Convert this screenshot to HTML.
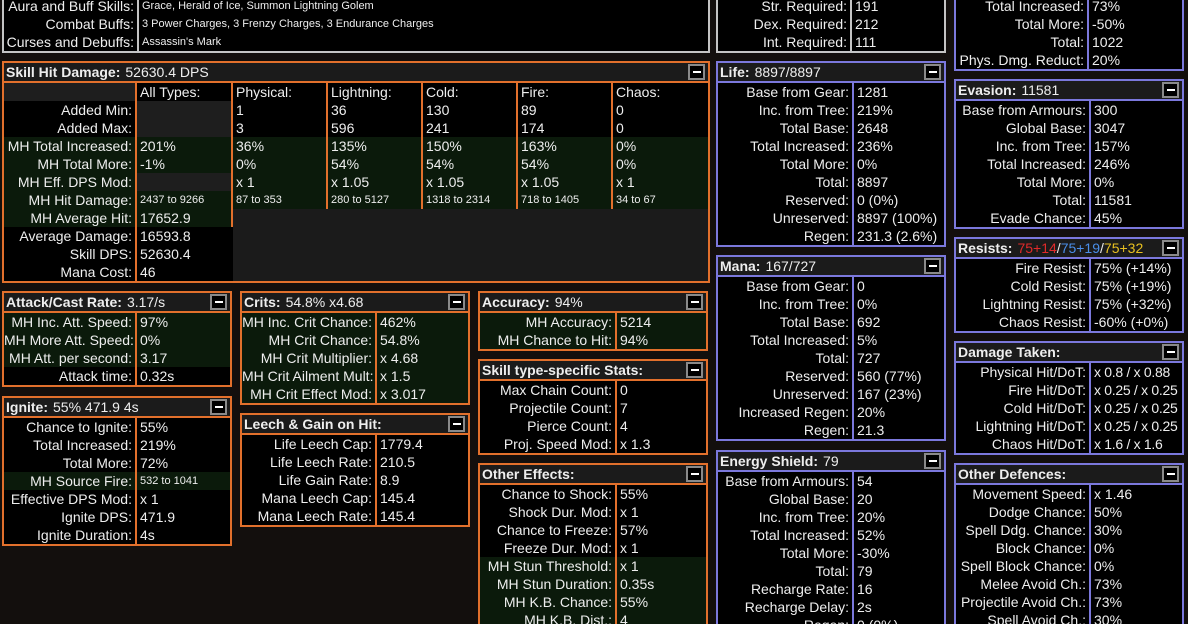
<!DOCTYPE html>
<html style="width:1188px;height:624px;overflow:hidden"><head><meta charset="utf-8">
<style>
*{margin:0;padding:0;box-sizing:border-box}
html,body{overflow:hidden}
body{width:1188px;height:624px;background:#130f0d;font-family:"Liberation Sans",sans-serif;font-size:14px;color:#eee;position:relative}
.p{position:absolute;border:2px solid;background:#1b1b1b;overflow:hidden}
.o{border-color:#e2702c}.b{border-color:#7b78dc}.w{border-color:#c4c4c4}
.h{height:20px;line-height:18px;border-bottom:2px solid;border-color:inherit;padding-left:2px;white-space:nowrap;position:relative}
.h b{margin-right:5px}
.h i{position:absolute;right:3px;top:1px;width:17px;height:16px;border:2px solid #8a8a8a;background:#000}
.h i:after{content:"";position:absolute;left:3px;top:5px;width:8px;height:2px;background:#fff}
.r{display:flex;height:18px;line-height:18px;white-space:nowrap}
.l{width:var(--lw);flex:none;text-align:right;padding-right:3px;border-right:2px solid;background:#000}
.o .l,.o .c{border-color:#e2702c}.b .l{border-color:#7b78dc}.w .l{border-color:#c4c4c4}
.v{flex:1;padding-left:3px;background:#000}
.g .l,.g .v,.g .c{background:#0b1a0b}
.c{width:95px;flex:none;border-right:2px solid;padding-left:3px;background:#000}
.c.f{width:96px}.c.z{border-right:0;flex:1}
.e{background:#1e1e1e!important}
.s{font-size:11px}
.t .v{letter-spacing:-0.3px}
</style></head><body>

<div class="p w" style="left:2px;top:-5px;width:708px;height:58px;--lw:135px">
<div class="r"><span class="l">Aura and Buff Skills:</span><span class="v s">Grace, Herald of Ice, Summon Lightning Golem</span></div>
<div class="r"><span class="l">Combat Buffs:</span><span class="v s">3 Power Charges, 3 Frenzy Charges, 3 Endurance Charges</span></div>
<div class="r"><span class="l">Curses and Debuffs:</span><span class="v s">Assassin's Mark</span></div>
</div>

<div class="p w" style="left:716px;top:-5px;width:230px;height:58px;--lw:134px">
<div class="r"><span class="l">Str. Required:</span><span class="v">191</span></div>
<div class="r"><span class="l">Dex. Required:</span><span class="v">212</span></div>
<div class="r"><span class="l">Int. Required:</span><span class="v">111</span></div>
</div>

<div class="p b" style="left:954px;top:-5px;width:230px;height:76px;--lw:133px">
<div class="r"><span class="l">Total Increased:</span><span class="v">73%</span></div>
<div class="r"><span class="l">Total More:</span><span class="v">-50%</span></div>
<div class="r"><span class="l">Total:</span><span class="v">1022</span></div>
<div class="r"><span class="l">Phys. Dmg. Reduct:</span><span class="v">20%</span></div>
</div>

<div class="p o" style="left:2px;top:61px;width:708px;height:222px;--lw:133px">
<div class="h"><b>Skill Hit Damage:</b>52630.4 DPS<i></i></div>
<div class="r"><span class="l e"></span><span class="c f">All Types:</span><span class="c">Physical:</span><span class="c">Lightning:</span><span class="c">Cold:</span><span class="c">Fire:</span><span class="c z">Chaos:</span></div>
<div class="r"><span class="l">Added Min:</span><span class="c f e"></span><span class="c">1</span><span class="c">36</span><span class="c">130</span><span class="c">89</span><span class="c z">0</span></div>
<div class="r"><span class="l">Added Max:</span><span class="c f e"></span><span class="c">3</span><span class="c">596</span><span class="c">241</span><span class="c">174</span><span class="c z">0</span></div>
<div class="r g"><span class="l">MH Total Increased:</span><span class="c f">201%</span><span class="c">36%</span><span class="c">135%</span><span class="c">150%</span><span class="c">163%</span><span class="c z">0%</span></div>
<div class="r g"><span class="l">MH Total More:</span><span class="c f">-1%</span><span class="c">0%</span><span class="c">54%</span><span class="c">54%</span><span class="c">54%</span><span class="c z">0%</span></div>
<div class="r g"><span class="l">MH Eff. DPS Mod:</span><span class="c f e"></span><span class="c">x 1</span><span class="c">x 1.05</span><span class="c">x 1.05</span><span class="c">x 1.05</span><span class="c z">x 1</span></div>
<div class="r g s"><span class="l" style="font-size:14px">MH Hit Damage:</span><span class="c f">2437 to 9266</span><span class="c">87 to 353</span><span class="c">280 to 5127</span><span class="c">1318 to 2314</span><span class="c">718 to 1405</span><span class="c z">34 to 67</span></div>
<div class="r g"><span class="l">MH Average Hit:</span><span class="c f">17652.9</span></div>
<div class="r"><span class="l">Average Damage:</span><span class="c f" style="border-right:0">16593.8</span></div>
<div class="r"><span class="l">Skill DPS:</span><span class="c f" style="border-right:0">52630.4</span></div>
<div class="r"><span class="l">Mana Cost:</span><span class="c f" style="border-right:0">46</span></div>
</div>

<div class="p o" style="left:2px;top:291px;width:230px;height:96px;--lw:133px">
<div class="h"><b>Attack/Cast Rate:</b>3.17/s<i></i></div>
<div class="r g"><span class="l">MH Inc. Att. Speed:</span><span class="v">97%</span></div>
<div class="r g"><span class="l">MH More Att. Speed:</span><span class="v">0%</span></div>
<div class="r g"><span class="l">MH Att. per second:</span><span class="v">3.17</span></div>
<div class="r"><span class="l">Attack time:</span><span class="v">0.32s</span></div>
</div>

<div class="p o" style="left:2px;top:396px;width:230px;height:150px;--lw:133px">
<div class="h"><b>Ignite:</b>55% 471.9 4s<i></i></div>
<div class="r"><span class="l">Chance to Ignite:</span><span class="v">55%</span></div>
<div class="r"><span class="l">Total Increased:</span><span class="v">219%</span></div>
<div class="r"><span class="l">Total More:</span><span class="v">72%</span></div>
<div class="r g"><span class="l">MH Source Fire:</span><span class="v s">532 to 1041</span></div>
<div class="r"><span class="l">Effective DPS Mod:</span><span class="v">x 1</span></div>
<div class="r"><span class="l">Ignite DPS:</span><span class="v">471.9</span></div>
<div class="r"><span class="l">Ignite Duration:</span><span class="v">4s</span></div>
</div>

<div class="p o" style="left:240px;top:291px;width:230px;height:114px;--lw:135px">
<div class="h"><b>Crits:</b>54.8% x4.68<i></i></div>
<div class="r g"><span class="l">MH Inc. Crit Chance:</span><span class="v">462%</span></div>
<div class="r g"><span class="l">MH Crit Chance:</span><span class="v">54.8%</span></div>
<div class="r g"><span class="l">MH Crit Multiplier:</span><span class="v">x 4.68</span></div>
<div class="r g"><span class="l">MH Crit Ailment Mult:</span><span class="v">x 1.5</span></div>
<div class="r g"><span class="l">MH Crit Effect Mod:</span><span class="v">x 3.017</span></div>
</div>

<div class="p o" style="left:240px;top:413px;width:230px;height:114px;--lw:135px">
<div class="h"><b>Leech &amp; Gain on Hit:</b><i></i></div>
<div class="r"><span class="l">Life Leech Cap:</span><span class="v">1779.4</span></div>
<div class="r"><span class="l">Life Leech Rate:</span><span class="v">210.5</span></div>
<div class="r"><span class="l">Life Gain Rate:</span><span class="v">8.9</span></div>
<div class="r"><span class="l">Mana Leech Cap:</span><span class="v">145.4</span></div>
<div class="r"><span class="l">Mana Leech Rate:</span><span class="v">145.4</span></div>
</div>

<div class="p o" style="left:478px;top:291px;width:230px;height:60px;--lw:137px">
<div class="h"><b>Accuracy:</b>94%<i></i></div>
<div class="r g"><span class="l">MH Accuracy:</span><span class="v">5214</span></div>
<div class="r g"><span class="l">MH Chance to Hit:</span><span class="v">94%</span></div>
</div>

<div class="p o" style="left:478px;top:359px;width:230px;height:96px;--lw:137px">
<div class="h"><b>Skill type-specific Stats:</b><i></i></div>
<div class="r"><span class="l">Max Chain Count:</span><span class="v">0</span></div>
<div class="r"><span class="l">Projectile Count:</span><span class="v">7</span></div>
<div class="r"><span class="l">Pierce Count:</span><span class="v">4</span></div>
<div class="r"><span class="l">Proj. Speed Mod:</span><span class="v">x 1.3</span></div>
</div>

<div class="p o" style="left:478px;top:463px;width:230px;height:170px;--lw:137px">
<div class="h"><b>Other Effects:</b><i></i></div>
<div class="r"><span class="l">Chance to Shock:</span><span class="v">55%</span></div>
<div class="r"><span class="l">Shock Dur. Mod:</span><span class="v">x 1</span></div>
<div class="r"><span class="l">Chance to Freeze:</span><span class="v">57%</span></div>
<div class="r"><span class="l">Freeze Dur. Mod:</span><span class="v">x 1</span></div>
<div class="r g"><span class="l">MH Stun Threshold:</span><span class="v">x 1</span></div>
<div class="r g"><span class="l">MH Stun Duration:</span><span class="v">0.35s</span></div>
<div class="r g"><span class="l">MH K.B. Chance:</span><span class="v">55%</span></div>
<div class="r g"><span class="l">MH K.B. Dist.:</span><span class="v">4</span></div>
</div>

<div class="p b" style="left:716px;top:61px;width:230px;height:186px;--lw:136px">
<div class="h"><b>Life:</b>8897/8897<i></i></div>
<div class="r"><span class="l">Base from Gear:</span><span class="v">1281</span></div>
<div class="r"><span class="l">Inc. from Tree:</span><span class="v">219%</span></div>
<div class="r"><span class="l">Total Base:</span><span class="v">2648</span></div>
<div class="r"><span class="l">Total Increased:</span><span class="v">236%</span></div>
<div class="r"><span class="l">Total More:</span><span class="v">0%</span></div>
<div class="r"><span class="l">Total:</span><span class="v">8897</span></div>
<div class="r"><span class="l">Reserved:</span><span class="v">0 (0%)</span></div>
<div class="r"><span class="l">Unreserved:</span><span class="v">8897 (100%)</span></div>
<div class="r"><span class="l">Regen:</span><span class="v">231.3 (2.6%)</span></div>
</div>

<div class="p b" style="left:716px;top:255px;width:230px;height:186px;--lw:136px">
<div class="h"><b>Mana:</b>167/727<i></i></div>
<div class="r"><span class="l">Base from Gear:</span><span class="v">0</span></div>
<div class="r"><span class="l">Inc. from Tree:</span><span class="v">0%</span></div>
<div class="r"><span class="l">Total Base:</span><span class="v">692</span></div>
<div class="r"><span class="l">Total Increased:</span><span class="v">5%</span></div>
<div class="r"><span class="l">Total:</span><span class="v">727</span></div>
<div class="r"><span class="l">Reserved:</span><span class="v">560 (77%)</span></div>
<div class="r"><span class="l">Unreserved:</span><span class="v">167 (23%)</span></div>
<div class="r"><span class="l">Increased Regen:</span><span class="v">20%</span></div>
<div class="r"><span class="l">Regen:</span><span class="v">21.3</span></div>
</div>

<div class="p b" style="left:716px;top:450px;width:230px;height:186px;--lw:136px">
<div class="h"><b>Energy Shield:</b>79<i></i></div>
<div class="r"><span class="l">Base from Armours:</span><span class="v">54</span></div>
<div class="r"><span class="l">Global Base:</span><span class="v">20</span></div>
<div class="r"><span class="l">Inc. from Tree:</span><span class="v">20%</span></div>
<div class="r"><span class="l">Total Increased:</span><span class="v">52%</span></div>
<div class="r"><span class="l">Total More:</span><span class="v">-30%</span></div>
<div class="r"><span class="l">Total:</span><span class="v">79</span></div>
<div class="r"><span class="l">Recharge Rate:</span><span class="v">16</span></div>
<div class="r"><span class="l">Recharge Delay:</span><span class="v">2s</span></div>
<div class="r"><span class="l">Regen:</span><span class="v">0 (0%)</span></div>
</div>

<div class="p b" style="left:954px;top:79px;width:230px;height:150px;--lw:135px">
<div class="h"><b>Evasion:</b>11581<i></i></div>
<div class="r"><span class="l">Base from Armours:</span><span class="v">300</span></div>
<div class="r"><span class="l">Global Base:</span><span class="v">3047</span></div>
<div class="r"><span class="l">Inc. from Tree:</span><span class="v">157%</span></div>
<div class="r"><span class="l">Total Increased:</span><span class="v">246%</span></div>
<div class="r"><span class="l">Total More:</span><span class="v">0%</span></div>
<div class="r"><span class="l">Total:</span><span class="v">11581</span></div>
<div class="r"><span class="l">Evade Chance:</span><span class="v">45%</span></div>
</div>

<div class="p b" style="left:954px;top:237px;width:230px;height:96px;--lw:135px">
<div class="h"><b>Resists:</b><span style="color:#e02a2a">75+14</span>/<span style="color:#4a8ee8">75+19</span>/<span style="color:#e8c020">75+32</span><i></i></div>
<div class="r"><span class="l">Fire Resist:</span><span class="v">75% (+14%)</span></div>
<div class="r"><span class="l">Cold Resist:</span><span class="v">75% (+19%)</span></div>
<div class="r"><span class="l">Lightning Resist:</span><span class="v">75% (+32%)</span></div>
<div class="r"><span class="l">Chaos Resist:</span><span class="v">-60% (+0%)</span></div>
</div>

<div class="p b t" style="left:954px;top:341px;width:230px;height:114px;--lw:135px">
<div class="h"><b>Damage Taken:</b><i></i></div>
<div class="r"><span class="l">Physical Hit/DoT:</span><span class="v">x 0.8 / x 0.88</span></div>
<div class="r"><span class="l">Fire Hit/DoT:</span><span class="v">x 0.25 / x 0.25</span></div>
<div class="r"><span class="l">Cold Hit/DoT:</span><span class="v">x 0.25 / x 0.25</span></div>
<div class="r"><span class="l">Lightning Hit/DoT:</span><span class="v">x 0.25 / x 0.25</span></div>
<div class="r"><span class="l">Chaos Hit/DoT:</span><span class="v">x 1.6 / x 1.6</span></div>
</div>

<div class="p b" style="left:954px;top:463px;width:230px;height:170px;--lw:135px">
<div class="h"><b>Other Defences:</b><i></i></div>
<div class="r"><span class="l">Movement Speed:</span><span class="v">x 1.46</span></div>
<div class="r"><span class="l">Dodge Chance:</span><span class="v">50%</span></div>
<div class="r"><span class="l">Spell Ddg. Chance:</span><span class="v">30%</span></div>
<div class="r"><span class="l">Block Chance:</span><span class="v">0%</span></div>
<div class="r"><span class="l">Spell Block Chance:</span><span class="v">0%</span></div>
<div class="r"><span class="l">Melee Avoid Ch.:</span><span class="v">73%</span></div>
<div class="r"><span class="l">Projectile Avoid Ch.:</span><span class="v">73%</span></div>
<div class="r"><span class="l">Spell Avoid Ch.:</span><span class="v">30%</span></div>
</div>

</body></html>
